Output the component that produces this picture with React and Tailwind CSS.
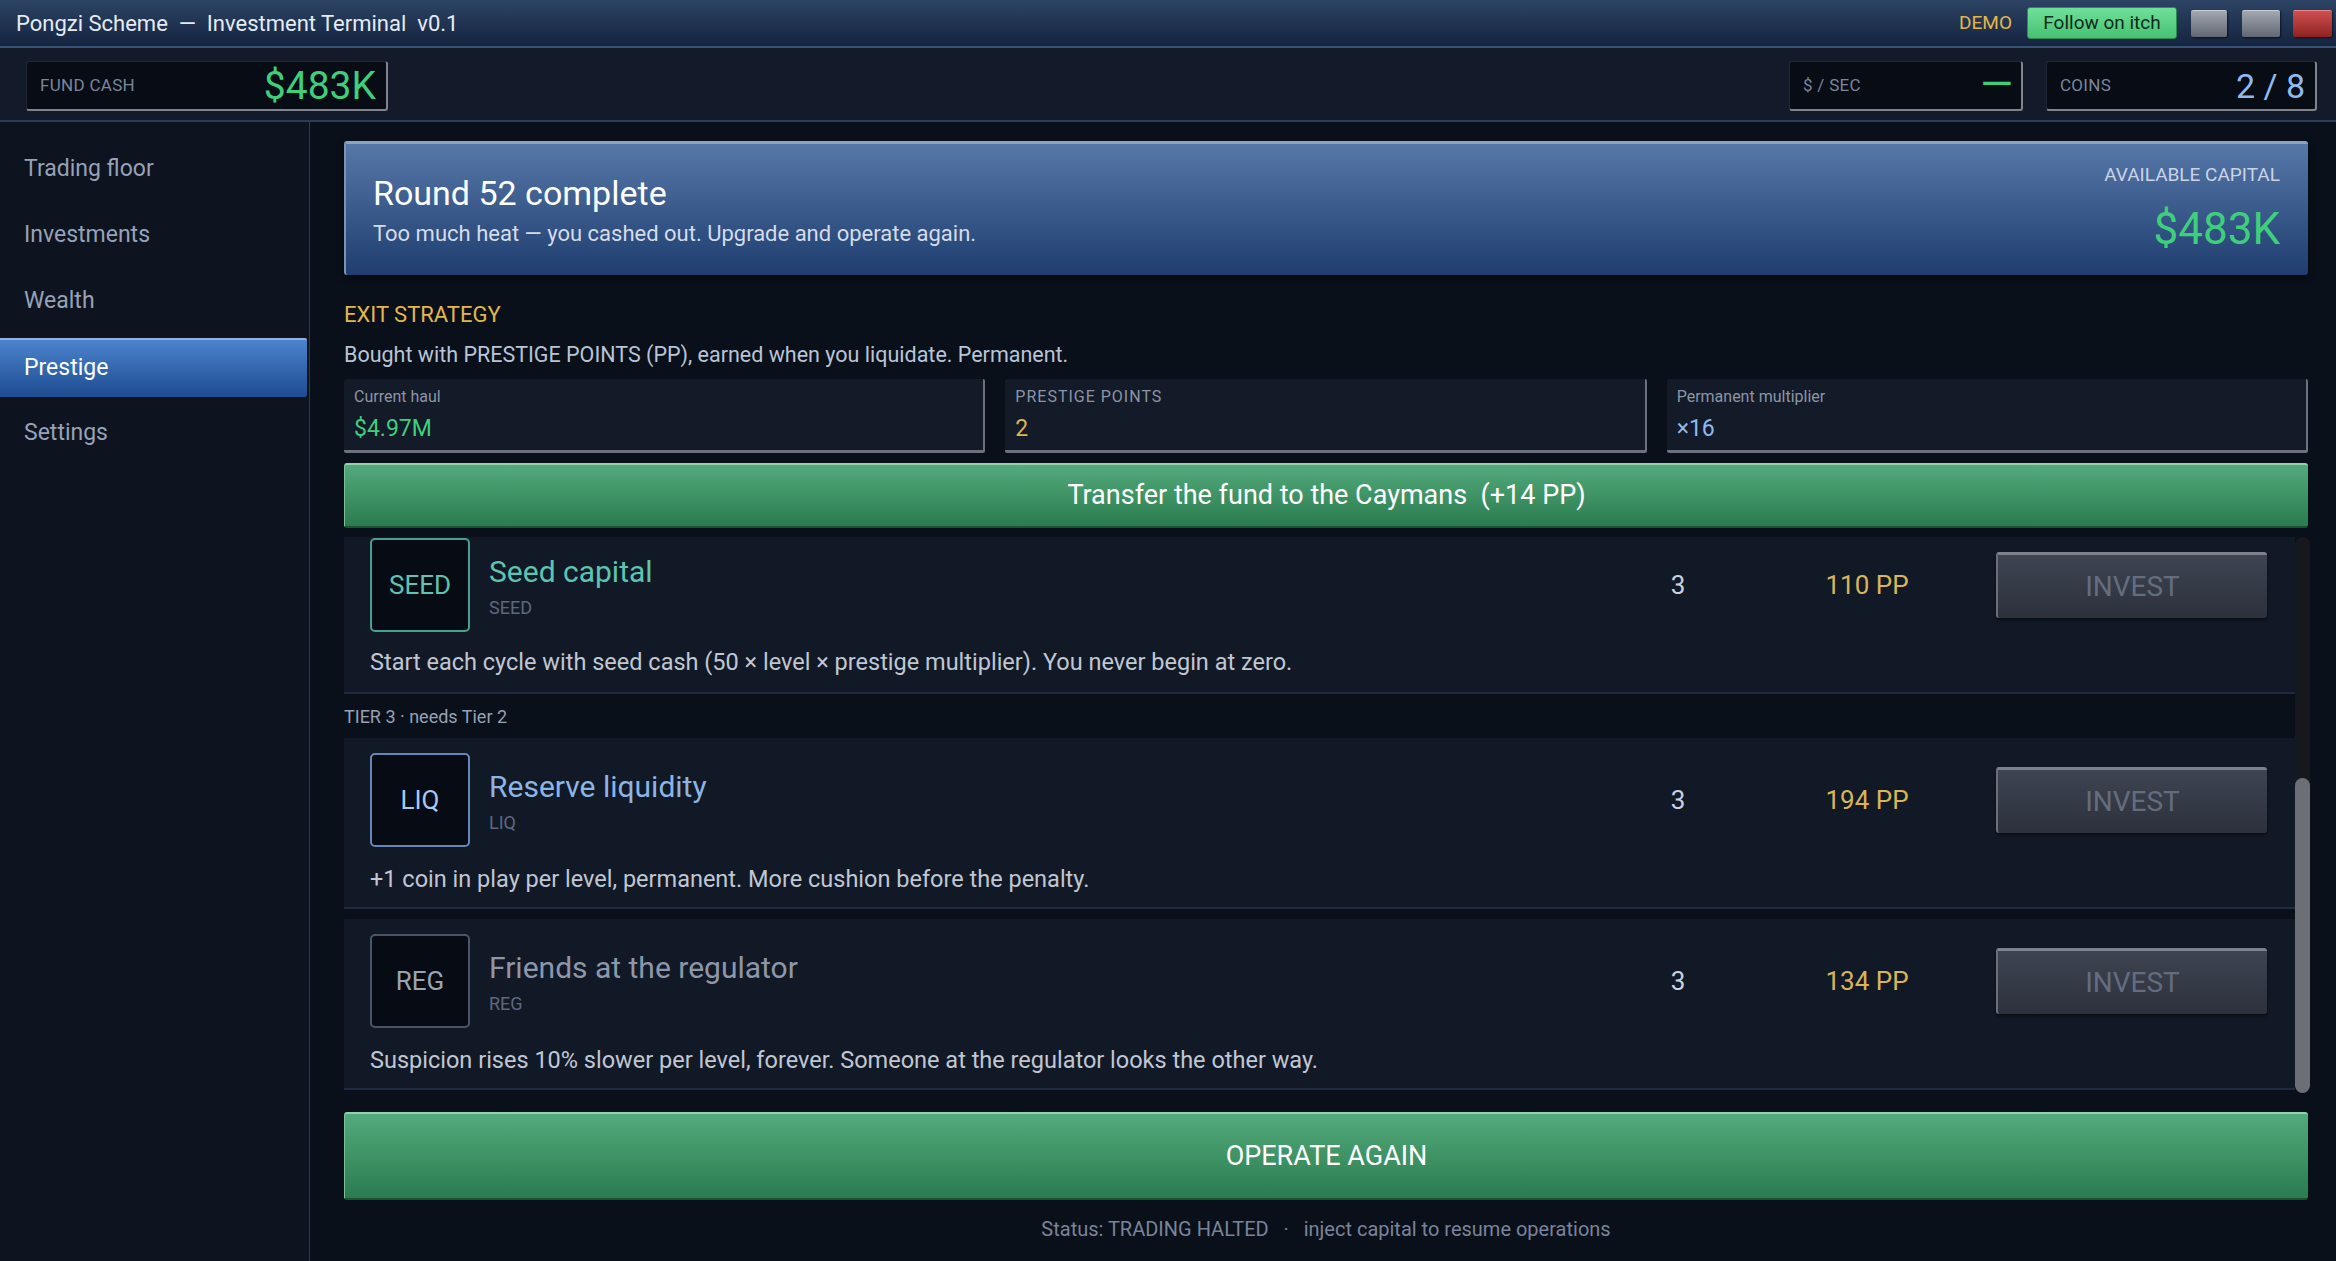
import React from "react";

function StatBox({ label, value, valueClass, className }) {
  return (
    <div
      className={
        "h-[50px] flex items-center justify-between pl-[13px] pr-[10px] bg-[#070c15] border-t border-l border-[#1f2838] border-r-2 border-b-2 border-r-[#7e848f] border-b-[#7e848f] rounded-[3px] " +
        className
      }
    >
      <span className="text-[17px] text-[#7b869a] tracking-[0.3px] mt-[2px]">{label}</span>
      <span className={valueClass}>{value}</span>
    </div>
  );
}

function Upgrade({ code, title, desc, price, theme, first }) {
  const themes = {
    teal: {
      box: "border-[#4b9f91] text-[#5fc3b0]",
      title: "text-[#5ec4b0]",
    },
    blue: {
      box: "border-[#6688b8] text-[#a9c8ee]",
      title: "text-[#8cb5e4]",
    },
    grey: {
      box: "border-[#4b5569] text-[#9ba4b4]",
      title: "text-[#8e97a9]",
    },
  };
  const t = themes[theme];
  return (
    <div
      className={
        "bg-[#121926] border-b-2 border-[#1d2a40] pl-[26px] pr-[28px] " +
        (first ? "pt-[1px] pb-[16px]" : "pt-[15px] pb-[14px]")
      }
    >
      <div className="flex items-center">
        <div
          className={
            "w-[100px] h-[94px] shrink-0 bg-[#070b13] border-2 rounded-[5px] flex items-center justify-center text-[26px] " +
            t.box
          }
        >
          {code}
        </div>
        <div className="flex-1 self-start mt-[16px] ml-[19px] flex flex-col">
          <span className={"text-[30px] leading-[36px] " + t.title}>{title}</span>
          <span className="text-[18px] leading-[24px] mt-[6px] text-[#5d6880]">{code}</span>
        </div>
        <div className="w-[120px] text-center text-[26px] text-[#c9d2e0]">3</div>
        <div className="w-[258px] text-center text-[26px] text-[#d8b557]">{price}</div>
        <button className="w-[271px] h-[66px] rounded-[3px] bg-gradient-to-b from-[#3e4451] to-[#2c313c] border-t-[3px] border-l-2 border-t-[#7d838d] border-l-[#6a707b] shadow-[0_2px_3px_rgba(0,0,0,0.5)] text-[28px] text-[#646d7e]">
          INVEST
        </button>
      </div>
      <div className={"text-[23.5px] leading-[28px] text-[#c0c7d3] " + (first ? "mt-[16px]" : "mt-[18px]")}>
        {desc}
      </div>
    </div>
  );
}

export default function App() {
  const nav = ["Trading floor", "Investments", "Wealth", "Prestige", "Settings"];
  return (
    <div className="w-[2336px] h-[1261px] overflow-hidden flex flex-col bg-[#0a101a] font-[Roboto,sans-serif] text-[#dfe6ef]">
      {/* Title bar */}
      <div className="h-[48px] shrink-0 flex items-center bg-gradient-to-b from-[#2d4464] to-[#142440] border-b-2 border-[#3a5275] pl-[16px] pr-[4px]">
        <span className="text-[22px] text-[#e4ebf4] whitespace-pre">Pongzi Scheme  —  Investment Terminal  v0.1</span>
        <div className="flex-1" />
        <span className="text-[19px] text-[#e3b647]">DEMO</span>
        <button className="ml-[15px] w-[150px] h-[32px] rounded-[3px] bg-gradient-to-b from-[#6fe09a] to-[#46c173] border border-[#2e8a52] text-[19px] text-[#0f2a1a]">
          Follow on itch
        </button>
        <div className="ml-[14px] w-[36px] h-[27px] rounded-[2px] bg-gradient-to-b from-[#a2a8b2] to-[#626873] border-t border-[#c8ccd3] shadow-[1px_1px_2px_rgba(0,0,0,0.6)]" />
        <div className="ml-[15px] w-[38px] h-[27px] rounded-[2px] bg-gradient-to-b from-[#a2a8b2] to-[#626873] border-t border-[#c8ccd3] shadow-[1px_1px_2px_rgba(0,0,0,0.6)]" />
        <div className="ml-[13px] w-[39px] h-[27px] rounded-[2px] bg-gradient-to-b from-[#d05050] to-[#8e2222] border-t border-[#e88a8a] shadow-[1px_1px_2px_rgba(0,0,0,0.6)]" />
      </div>

      {/* Stats bar */}
      <div className="h-[74px] shrink-0 flex items-center bg-[#131b2a] border-b-2 border-[#2b3c58] pl-[26px] pr-[19px] pt-[3px]">
        <StatBox
          label="FUND CASH"
          value="$483K"
          valueClass="text-[39px] leading-none text-[#3fcf7c] mt-[2px]"
          className="w-[362px]"
        />
        <div className="flex-1" />
        <StatBox
          label="$ / SEC"
          value="—"
          valueClass="text-[42px] leading-none text-[#3fcf7c] mr-[-2px]"
          className="w-[234px]"
        />
        <StatBox
          label="COINS"
          value="2 / 8"
          valueClass="text-[34px] leading-none text-[#8ebbee] mt-[2px]"
          className="w-[271px] ml-[23px]"
        />
      </div>

      {/* Body */}
      <div className="flex-1 flex min-h-0">
        {/* Sidebar */}
        <div className="w-[310px] shrink-0 bg-[#0d131f] border-r border-[#2a3b57] pt-[18px] flex flex-col gap-[7px]">
          {nav.map((n) =>
            n === "Prestige" ? (
              <div
                key={n}
                className="h-[59px] mr-[2px] flex items-center pl-[24px] text-[23px] text-white bg-gradient-to-b from-[#4b84cd] to-[#1d4c91] border-t-2 border-[#8eb2e2] rounded-r-[2px]"
              >
                {n}
              </div>
            ) : (
              <div key={n} className="h-[59px] flex items-center pl-[24px] text-[23px] text-[#97a2b6]">
                {n}
              </div>
            )
          )}
        </div>

        {/* Main */}
        <div className="flex-1 min-w-0 flex flex-col pt-[19px] pl-[34px] pr-[28px]">
          {/* Banner */}
          <div className="h-[134px] shrink-0 flex justify-between rounded-[3px] bg-gradient-to-b from-[#5678a8] to-[#1f3e6f] border-t-[3px] border-l-2 border-t-[#8da3c3] border-l-[#7d93b5] shadow-[0_3px_6px_rgba(0,0,0,0.5)] pl-[27px] pr-[28px]">
            <div className="flex flex-col pt-[28px]">
              <span className="text-[34px] leading-[42px] text-white">Round 52 complete</span>
              <span className="text-[22px] leading-[30px] mt-[5px] text-[#d4dcea]">
                Too much heat — you cashed out. Upgrade and operate again.
              </span>
            </div>
            <div className="flex flex-col items-end pt-[18px]">
              <span className="text-[19px] leading-[26px] text-[#c9d4e6]">AVAILABLE CAPITAL</span>
              <span className="text-[44px] leading-[52px] mt-[15px] text-[#3fcf7c]">$483K</span>
            </div>
          </div>

          <div className="mt-[26px] text-[22px] leading-[28px] text-[#e2b74e]">EXIT STRATEGY</div>
          <div className="mt-[12px] text-[21.5px] leading-[28px] text-[#b9c4d6]">
            Bought with PRESTIGE POINTS (PP), earned when you liquidate. Permanent.
          </div>

          {/* Stats */}
          <div className="mt-[10px] h-[74px] shrink-0 grid grid-cols-3 gap-[20px]">
            {[
              ["Current haul", "$4.97M", "text-[#3fcf7c]", ""],
              ["PRESTIGE POINTS", "2", "text-[#dcb555]", "tracking-[1px]"],
              ["Permanent multiplier", "×16", "text-[#8ebbee]", ""],
            ].map(([l, v, c, tr]) => (
              <div
                key={l}
                className="bg-[#131a28] border-r-2 border-b-[3px] border-[#6b717d] rounded-[2px] pl-[10px] pt-[7px] flex flex-col"
              >
                <span className={"text-[16px] leading-[22px] text-[#8c95a6] " + tr}>{l}</span>
                <span className={"text-[23px] leading-[30px] mt-[6px] " + c}>{v}</span>
              </div>
            ))}
          </div>

          {/* Transfer */}
          <button className="mt-[10px] h-[65px] shrink-0 rounded-[3px] bg-gradient-to-b from-[#53aa7c] to-[#2a7c4f] border-t-2 border-l border-t-[#94d2ad] border-l-[#7cc09a] border-b-2 border-b-[#1b5234] text-[27px] text-white whitespace-pre">
            Transfer the fund to the Caymans  (+14 PP)
          </button>

          {/* Scroll area */}
          <div className="mt-[9px] h-[556px] shrink-0 flex mr-[-2px]">
            <div className="flex-1 min-w-0 flex flex-col overflow-hidden">
              <Upgrade
                first
                code="SEED"
                title="Seed capital"
                price="110 PP"
                theme="teal"
                desc="Start each cycle with seed cash (50 × level × prestige multiplier). You never begin at zero."
              />
              <div className="mt-[12px] mb-[11px] text-[18px] leading-[21px] text-[#97a0b2]">TIER 3 · needs Tier 2</div>
              <Upgrade
                code="LIQ"
                title="Reserve liquidity"
                price="194 PP"
                theme="blue"
                desc="+1 coin in play per level, permanent. More cushion before the penalty."
              />
              <div className="h-[10px] shrink-0" />
              <Upgrade
                code="REG"
                title="Friends at the regulator"
                price="134 PP"
                theme="grey"
                desc="Suspicion rises 10% slower per level, forever. Someone at the regulator looks the other way."
              />
            </div>
            <div className="w-[15px] shrink-0 bg-[#16181e] rounded-full flex flex-col">
              <div className="h-[241px] shrink-0" />
              <div className="flex-1 rounded-full bg-[#6d6f76]" />
            </div>
          </div>

          {/* Operate again */}
          <button className="mt-[19px] h-[88px] shrink-0 rounded-[3px] bg-gradient-to-b from-[#53aa7c] to-[#2a7c4f] border-t-2 border-l border-t-[#94d2ad] border-l-[#7cc09a] border-b-2 border-b-[#1b5234] text-[27px] text-white">
            OPERATE AGAIN
          </button>

          <div className="mt-[15px] text-center text-[20px] leading-[28px] text-[#7a8499] whitespace-pre">
            Status: TRADING HALTED   ·   inject capital to resume operations
          </div>
        </div>
      </div>
    </div>
  );
}
